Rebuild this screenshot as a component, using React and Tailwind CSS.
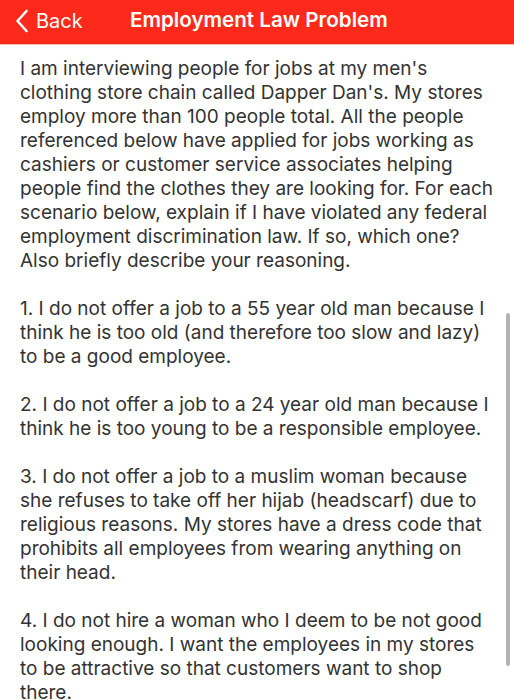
import React from "react";

const paras = [
  [
    "I am interviewing people for jobs at my men's",
    "clothing store chain called Dapper Dan's. My stores",
    "employ more than 100 people total. All the people",
    "referenced below have applied for jobs working as",
    "cashiers or customer service associates helping",
    "people find the clothes they are looking for. For each",
    "scenario below, explain if I have violated any federal",
    "employment discrimination law. If so, which one?",
    "Also briefly describe your reasoning.",
  ],
  [
    "1. I do not offer a job to a 55 year old man because I",
    "think he is too old (and therefore too slow and lazy)",
    "to be a good employee.",
  ],
  [
    "2. I do not offer a job to a 24 year old man because I",
    "think he is too young to be a responsible employee.",
  ],
  [
    "3. I do not offer a job to a muslim woman because",
    "she refuses to take off her hijab (headscarf) due to",
    "religious reasons. My stores have a dress code that",
    "prohibits all employees from wearing anything on",
    "their head.",
  ],
  [
    "4. I do not hire a woman who I deem to be not good",
    "looking enough. I want the employees in my stores",
    "to be attractive so that customers want to shop",
    "there.",
  ],
];

export default function App() {
  return (
    <div className="relative w-[514px] h-[700px] overflow-hidden bg-white" style={{ fontFamily: "Inter, 'Liberation Sans', sans-serif" }}>
      <div className="h-[45px] bg-[#fd2a1b] border-b border-[#f8b4ae] flex items-center pb-[3px] text-white">
        <div className="flex items-center pl-[15px] w-[130px]">
          <svg width="14" height="24" viewBox="0 0 14 24" fill="none" className="mr-[7px]">
            <path d="M11.5 2 L2.5 12 L11.5 22" stroke="white" strokeWidth="2.6" strokeLinecap="round" strokeLinejoin="round" />
          </svg>
          <span className="text-[20px] leading-none">Back</span>
        </div>
        <span className="text-[20.6px] font-semibold leading-none">Employment Law Problem</span>
      </div>
      <div className="pl-[20px] pt-[12px] text-[19px] leading-[24px] text-[#333333] flex flex-col gap-[24px]">
        {paras.map((p, i) => (
          <p key={i} className="whitespace-nowrap">
            {p.map((l, j) => (
              <React.Fragment key={j}>
                {l}
                {j < p.length - 1 && <br />}
              </React.Fragment>
            ))}
          </p>
        ))}
      </div>
      <div className="absolute left-[506px] top-[313px] w-[4px] h-[353px] rounded-full bg-[#b3b3b3]" />
    </div>
  );
}
